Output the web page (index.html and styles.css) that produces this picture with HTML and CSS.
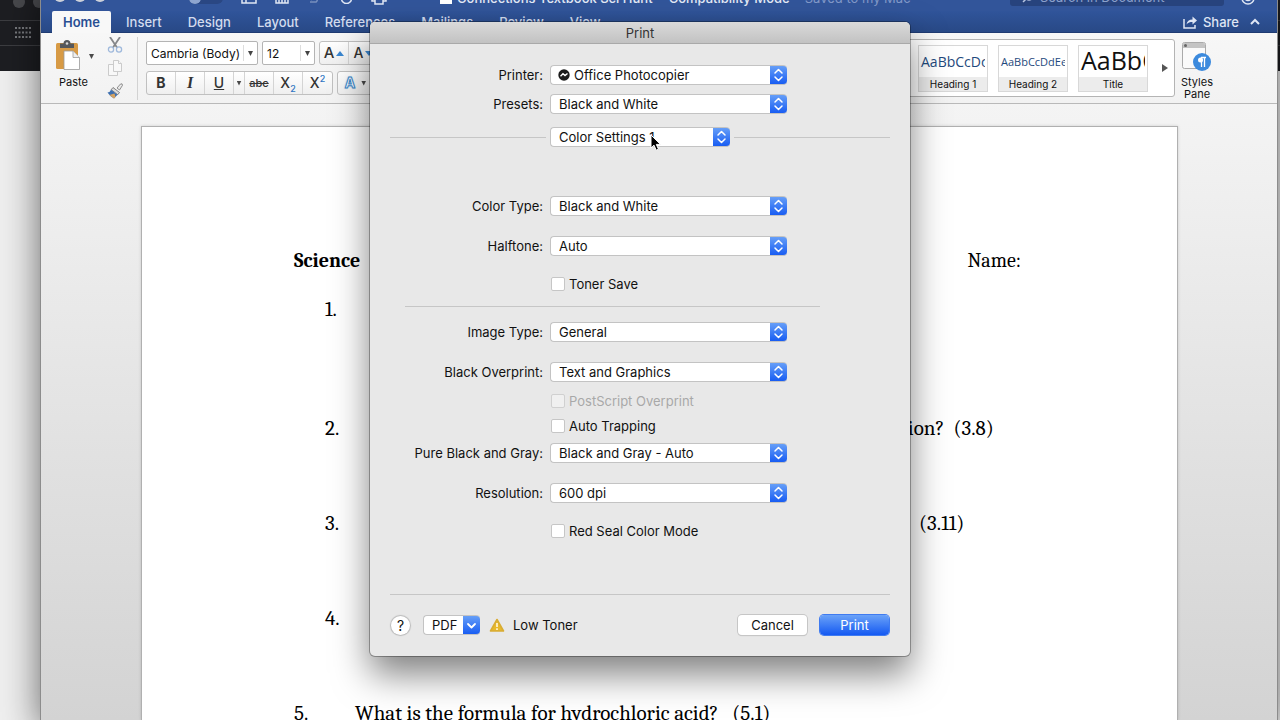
FILE: index.html
```html
<!DOCTYPE html>
<html lang="en">
<head>
    <meta charset="UTF-8">
    <meta name="viewport" content="width=device-width, initial-scale=1.0">
    <title>Print</title>
    <link rel="stylesheet" href="styles.css">
</head>
<body>
    <!-- Dark app behind the document window -->
    <div class="back-app">
        <div class="back-row back-lights"><span></span><span></span></div>
        <div class="back-row back-tools">
            <svg width="16" height="12" viewBox="0 0 16 12" fill="#77797d">
                <path d="M0 0h2v2H0zM3.500 0h2v2h-2zM7 0h2v2H7zM10.500 0h2v2h-2zM14 0h2v2h-2zM0 4.500h2v2H0zM3.500 4.500h2v2h-2zM7 4.500h2v2H7zM10.500 4.500h2v2h-2zM14 4.500h2v2h-2zM0 9h2v2H0zM3.500 9h2v2h-2zM7 9h2v2H7zM10.500 9h2v2h-2zM14 9h2v2h-2z"/>
            </svg>
        </div>
    </div>

    <!-- Document window -->
    <div class="word">
        <header class="titlebar">
            <div class="lights"><span></span><span></span><span></span></div>
            <span class="autosave"><i></i></span>
            <div class="quick">
                <svg width="16" height="12" viewBox="0 0 16 12" fill="none" stroke="#dfe6f4" stroke-width="1.500"><path d="M1 1h14v10H1zM5 1v10M7 7h5"/></svg>
                <svg width="14" height="12" viewBox="0 0 14 12" fill="none" stroke="#dfe6f4" stroke-width="1.500"><path d="M1 1h12v10H1zM4 11V7h6v4M7 7v4"/></svg>
                <svg class="dim" width="14" height="12" viewBox="0 0 14 12" fill="none" stroke="#dfe6f4" stroke-width="1.500"><path d="M2 5h7a3 3 0 0 1 0 5H3M5 2L2 5l3 3"/></svg>
                <svg width="14" height="12" viewBox="0 0 14 12" fill="none" stroke="#dfe6f4" stroke-width="1.500"><path d="M11 3a5 5 0 1 1-7 0M11 0v4H7"/></svg>
                <svg width="16" height="14" viewBox="0 0 16 14" fill="none" stroke="#dfe6f4" stroke-width="1.500"><path d="M4 4V1h8v3M4 10H1V4h14v6h-3M4 8h8v5H4z"/></svg>
            </div>
            <div class="doc-title">
                <svg width="12" height="12" viewBox="0 0 12 12"><path d="M0 0h12v12H0z" fill="#fff"/><path d="M2 3h8M2 6h8" stroke="#2b4f90"/></svg>
                <span>Connections Textbook Sci Hunt</span>
                <span>-</span>
                <span>Compatibility Mode</span>
                <span class="saved">Saved to my Mac</span>
            </div>
            <div class="search">
                <svg width="12" height="12" viewBox="0 0 12 12" fill="none" stroke="#b6c4e0" stroke-width="1.500"><circle cx="7" cy="5" r="4"/><path d="M4 8l-3 3"/></svg>
                <input type="text" placeholder="Search in Document" aria-label="Search in Document">
            </div>
            <svg class="smile" width="14" height="14" viewBox="0 0 14 14" fill="none" stroke="#dfe6f4" stroke-width="1.500"><circle cx="7" cy="7" r="6"/><path d="M4 8q3 3 6 0"/></svg>
        </header>

        <nav class="tabs">
            <a href="#" class="tab active">Home</a>
            <a href="#" class="tab">Insert</a>
            <a href="#" class="tab">Design</a>
            <a href="#" class="tab">Layout</a>
            <a href="#" class="tab">References</a>
            <a href="#" class="tab">Mailings</a>
            <a href="#" class="tab">Review</a>
            <a href="#" class="tab">View</a>
            <a href="#" class="share">
                <svg width="15" height="14" viewBox="0 0 15 14" fill="none" stroke="#dfe6f4" stroke-width="1.500">
                    <path d="M1 4v9h11v-3"/><path d="M3.500 9.500C4 6 6 4.500 9.500 4.500V1.500L14 5.500 9.500 9.500V7C7 7 5 7.500 3.500 9.500z" fill="#dfe6f4" stroke="none"/>
                </svg>
                Share
            </a>
            <button class="collapse" type="button" aria-label="Collapse ribbon">
                <svg width="10" height="7" viewBox="0 0 10 7" fill="none" stroke="#dfe6f4" stroke-width="2"><path d="M1 6l4-4 4 4"/></svg>
            </button>
        </nav>

        <div class="ribbon">
            <button class="paste" type="button">
                <svg width="24" height="30" viewBox="0 0 24 30">
                    <rect x="0" y="3" width="22" height="26" rx="1.500" fill="#d79a45"/>
                    <path d="M4 3.500h3.500a3.500 3.500 0 0 1 7 0H18V8H4z" fill="#55585c"/>
                    <circle cx="11" cy="3.500" r="1.300" fill="#d8d8d8"/>
                    <path d="M8 11h9l6.500 6.500V29.500H8z" fill="#fff" stroke="#999" stroke-width=".8"/>
                    <path d="M17 11v6.500h6.500" fill="#eee" stroke="#999" stroke-width=".8"/>
                </svg>
                <span>Paste</span>
            </button>
            <span class="caret paste-caret"></span>
            <div class="clip-tools">
                <button type="button" aria-label="Cut">
                    <svg width="16" height="16" viewBox="0 0 16 16" fill="none">
                        <path d="M3 0l7 10.500M13 0L6 10.500" stroke="#85878a" stroke-width="1.800"/>
                        <circle cx="4" cy="12.500" r="2.600" stroke="#9fb9dc" stroke-width="1.300"/>
                        <circle cx="12" cy="12.500" r="2.600" stroke="#9fb9dc" stroke-width="1.300"/>
                    </svg>
                </button>
                <button type="button" aria-label="Copy">
                    <svg width="16" height="16" viewBox="0 0 16 16" fill="#f8f8f8" stroke="#cbcbcb">
                        <path d="M1.500 4.500h6l3 3v8h-9z"/><path d="M6.500.5h5l3 3v8h-8z"/><path d="M11.500.5v3h3"/>
                    </svg>
                </button>
                <button type="button" aria-label="Format Painter">
                    <svg width="16" height="16" viewBox="0 0 16 16">
                        <path d="M10 5l3.500-4q2-1 2 1.300L12.500 7z" fill="#e9e9e9" stroke="#777" stroke-width=".8"/>
                        <path d="M6 4.500l6.500 5-1.800 2.200-6.500-5z" fill="#ddd" stroke="#666" stroke-width=".8"/>
                        <path d="M4 6.800l6.500 5L7 15.500Q3 13.500.5 9.500q2.500 0 3.500-2.700z" fill="#3d6fb0"/>
                        <path d="M2.500 12l5-1.500 1 3.500-1.500 1.500z" fill="#d5a260"/>
                    </svg>
                </button>
            </div>
            <div class="font-tools">
                <div class="tool-row">
                    <select class="box font-name" aria-label="Font"><option>Cambria (Body)</option></select>
                    <select class="box font-size" aria-label="Font size"><option>12</option></select>
                    <div class="btn-group">
                        <button type="button" class="grow">A<svg width="8" height="5" viewBox="0 0 8 5" fill="#3a86d0"><path d="M0 5l4-5 4 5z"/></svg></button>
                        <button type="button" class="shrink">A<svg width="8" height="5" viewBox="0 0 8 5" fill="#3a86d0"><path d="M0 0h8L4 5z"/></svg></button>
                    </div>
                </div>
                <div class="tool-row">
                    <div class="btn-group">
                        <button type="button"><b>B</b></button>
                        <button type="button"><i class="italic">I</i></button>
                        <button type="button"><u>U</u></button>
                        <button type="button" class="narrow" aria-label="Underline styles"><span class="caret"></span></button>
                        <button type="button"><s>abc</s></button>
                        <button type="button"><span>X<sub>2</sub></span></button>
                        <button type="button"><span>X<sup>2</sup></span></button>
                    </div>
                    <div class="btn-group">
                        <button type="button" class="effects"><span class="glow">A</span><span class="caret"></span></button>
                        <button type="button" aria-label="Highlight"></button>
                    </div>
                </div>
            </div>
            <div class="gallery">
                <button type="button" class="style-card"><span class="sample h1">AaBbCcDc</span><span class="name">Heading 1</span></button>
                <button type="button" class="style-card"><span class="sample h2">AaBbCcDdEe</span><span class="name">Heading 2</span></button>
                <button type="button" class="style-card"><span class="sample title">AaBbC</span><span class="name">Title</span></button>
                <svg class="more" width="6" height="8" viewBox="0 0 6 8" fill="#555"><path d="M0 0l6 4-6 4z"/></svg>
            </div>
            <button type="button" class="styles-pane">
                <svg width="30" height="30" viewBox="0 0 30 30">
                    <rect x=".5" y=".5" width="23" height="26" rx="2" fill="#fafafa" stroke="#aaa"/>
                    <path d="M1 6V2.500Q1 1 2.500 1h19Q23 1 23 2.500V6z" fill="#c4c4c4"/>
                    <circle cx="3.500" cy="3.500" r="1.500" fill="#666"/>
                    <circle cx="20" cy="20" r="9" fill="#3c8add"/>
                    <path d="M19.500 25V15.500M22.500 25V15.500M24 15.500h-5" stroke="#fff" stroke-width="1.300" fill="none"/>
                    <circle cx="18.500" cy="18" r="2.500" fill="#fff"/>
                </svg>
                <span>Styles<br>Pane</span>
            </button>
        </div>

        <main class="canvas">
            <article class="page">
                <div class="line heading"><strong>Science</strong><span class="student">Name:</span></div>
                <div class="line question q1"><span class="num">1.</span></div>
                <div class="line question q2"><span class="num">2.</span><span class="tail">tion?&nbsp; (3.8)</span></div>
                <div class="line question q3"><span class="num">3.</span><span class="tail">?&nbsp; (3.11)</span></div>
                <div class="line question q4"><span class="num">4.</span></div>
                <div class="line q5"><span class="num wide">5.</span><span>What is the formula for hydrochloric acid?&nbsp;&nbsp; (5.1)</span></div>
            </article>
        </main>
    </div>

    <!-- Print dialog -->
    <form class="dialog">
        <h1 class="dialog-title">Print</h1>
        <div class="dialog-body">
            <div class="row first">
                <label for="printer">Printer:</label>
                <div class="with-icon">
                    <select id="printer"><option>Office Photocopier</option></select>
                    <svg width="12" height="12" viewBox="0 0 12 12"><circle cx="6" cy="6" r="5.700" fill="#1b1b1b"/><path d="M2.500 7.300L5 4.800l2 1.700 2.500-2" fill="none" stroke="#fff" stroke-width="1.400"/></svg>
                </div>
            </div>
            <div class="row near">
                <label for="presets">Presets:</label>
                <select id="presets"><option>Black and White</option></select>
            </div>
            <div class="section-row">
                <hr>
                <select aria-label="Settings section"><option>Color Settings 1</option></select>
                <hr>
            </div>
            <div class="row section-start">
                <label for="colorType">Color Type:</label>
                <select id="colorType"><option>Black and White</option></select>
            </div>
            <div class="row">
                <label for="halftone">Halftone:</label>
                <select id="halftone"><option>Auto</option></select>
            </div>
            <div class="check">
                <input type="checkbox" id="tonerSave"><label for="tonerSave">Toner Save</label>
            </div>
            <hr class="divider">
            <div class="row after-divider">
                <label for="imageType">Image Type:</label>
                <select id="imageType"><option>General</option></select>
            </div>
            <div class="row">
                <label for="overprint">Black Overprint:</label>
                <select id="overprint"><option>Text and Graphics</option></select>
            </div>
            <div class="check near">
                <input type="checkbox" id="psOverprint" disabled><label for="psOverprint">PostScript Overprint</label>
            </div>
            <div class="check tight">
                <input type="checkbox" id="trapping"><label for="trapping">Auto Trapping</label>
            </div>
            <div class="row after-checks">
                <label for="pureBlack">Pure Black and Gray:</label>
                <select id="pureBlack"><option>Black and Gray - Auto</option></select>
            </div>
            <div class="row">
                <label for="resolution">Resolution:</label>
                <select id="resolution"><option>600 dpi</option></select>
            </div>
            <div class="check">
                <input type="checkbox" id="redSeal"><label for="redSeal">Red Seal Color Mode</label>
            </div>
        </div>
        <footer class="dialog-footer">
            <button type="button" class="help" aria-label="Help">?</button>
            <select class="pdf" aria-label="PDF"><option>PDF</option></select>
            <div class="status">
                <svg width="16" height="15" viewBox="0 0 16 15">
                    <path d="M8 1.500L14.500 13h-13z" fill="#e8b92c" stroke="#d8ac34" stroke-width="1.600" stroke-linejoin="round"/>
                    <path d="M8 5v4M8 10.300v1.700" stroke="#fff8e0" stroke-width="1.600"/>
                </svg>
                <span>Low Toner</span>
            </div>
            <button type="button" class="btn">Cancel</button>
            <button type="submit" class="btn primary">Print</button>
        </footer>
        <svg class="pointer" width="12" height="18" viewBox="0 0 12 18"><path d="M1 1v13l3-2.800 2.200 5 2.300-1-2.200-4.800h4.200z" fill="#000" stroke="#fff"/></svg>
    </form>
</body>
</html>
```
FILE: styles.css
```css
* {
    margin: 0;
    padding: 0;
    box-sizing: border-box;
}

body {
    position: relative;
    height: 100vh;
    overflow: hidden;
    background: #efefef;
    font-family: Inter, "Liberation Sans", sans-serif;
    font-size: 13px;
    color: #111;
}

button,
select,
input {
    font: inherit;
    color: inherit;
}

button {
    border: 0;
    background: none;
}

a {
    text-decoration: none;
}

svg {
    display: block;
    flex: none;
}

hr {
    border: 0;
    border-top: 1px solid #c6c6c6;
}

/* App behind */
.back-app {
    position: absolute;
    top: 0;
    left: 0;
    right: 0;
    height: 71px;
    background: #1d1e22;
}

.back-row {
    display: flex;
    align-items: center;
    border-bottom: 1px solid #3c3d41;
    padding-left: 13px;
}

.back-lights {
    height: 21px;
    gap: 8px;
    align-items: flex-start;
}

.back-lights span {
    width: 12px;
    height: 12px;
    margin-top: -4px;
    border-radius: 50%;
    background: #48494d;
}

.back-tools {
    height: 25px;
    padding-left: 15px;
}

/* Document window */
.word {
    position: absolute;
    top: -15px;
    left: 41px;
    right: 3px;
    bottom: 0;
    display: flex;
    flex-direction: column;
    background: #f4f4f4;
    box-shadow: 0 0 0 1px #8c8c8c, 0 10px 36px rgba(0, 0, 0, 0.6);
}

.titlebar {
    display: flex;
    align-items: center;
    height: 26px;
    padding-left: 13px;
    background: #32559a;
    color: #e3e9f5;
    font-weight: 500;
}

.lights {
    display: flex;
    gap: 8px;
    margin-bottom: 5px;
}

.lights span {
    width: 12px;
    height: 12px;
    border-radius: 50%;
    background: #cdd1da;
}

.autosave {
    width: 34px;
    height: 12px;
    margin-left: 83px;
    border-radius: 6px;
    background: #2a4783;
}

.autosave i {
    display: block;
    width: 12px;
    height: 12px;
    border-radius: 50%;
    background: #8ea5cf;
}

.quick {
    display: flex;
    align-items: center;
    gap: 18px;
    margin-left: 18px;
    width: 199px;
}

.dim {
    opacity: 0.4;
}

.doc-title {
    display: flex;
    align-items: center;
    gap: 5px;
    white-space: nowrap;
}

.saved {
    margin-left: 10px;
    font-weight: 400;
    color: #8299c8;
}

.search {
    display: flex;
    align-items: center;
    gap: 6px;
    width: 214px;
    height: 18px;
    margin: -3px 17px 0 auto;
    padding-left: 12px;
    border-radius: 3px;
    background: #27437d;
}

.search input {
    flex: 1;
    min-width: 0;
    border: 0;
    background: none;
    font-weight: 400;
}

.search input::placeholder {
    color: #8ba0cb;
}

.smile {
    margin-right: 22px;
}

/* Tabs */
.tabs {
    display: flex;
    align-items: center;
    height: 22px;
    padding-left: 11px;
    background: linear-gradient(#30549a, #284986);
    border-bottom: 1px solid #1f3b72;
    font-weight: 500;
}

.tab {
    padding: 0 13px;
    line-height: 20px;
    color: #d3dcee;
}

.tab.active {
    padding: 0 11px;
    margin-right: 2px;
    line-height: 22px;
    background: #f8f8f8;
    border-radius: 2px 2px 0 0;
    color: #284f93;
    font-weight: 600;
}

.share {
    display: flex;
    align-items: center;
    gap: 5px;
    margin-left: auto;
    color: #dfe6f4;
}

.collapse {
    margin: 0 17px 0 11px;
}

/* Ribbon */
.ribbon {
    display: flex;
    height: 71px;
    padding: 4px 0 3px 15px;
    background: linear-gradient(#f7f7f7, #f2f2f2);
    border-bottom: 1px solid #b9b9b9;
    font-size: 11px;
}

.paste {
    display: flex;
    flex-direction: column;
    gap: 5px;
    padding-top: 3px;
    width: 33px;
}

.paste span {
    margin-left: 2px;
    line-height: 14px;
}

.caret {
    width: 5px;
    height: 5px;
    background: #4a4a4a;
    clip-path: polygon(0 0, 100% 0, 50% 100%);
}

.paste-caret {
    margin-top: 17px;
}

.clip-tools {
    display: flex;
    flex-direction: column;
    gap: 7px;
    width: 44px;
    padding: 0 0 0 13px;
    border-right: 1px solid #d2d2d2;
}

.font-tools {
    display: flex;
    flex-direction: column;
    gap: 6px;
    padding: 4px 0 0 8px;
    color: #333;
}

.tool-row {
    display: flex;
    gap: 4px;
}

.box {
    appearance: none;
    height: 24px;
    padding-left: 4px;
    border: 1px solid #b4b4b4;
    border-radius: 2px;
    background: url('data:image/svg+xml,<svg xmlns="http://www.w3.org/2000/svg" width="14" height="22"><path d="M.5 3v16" stroke="%23ddd"/><path d="M5 9h5l-2.500 5z" fill="%23444"/></svg>') right center no-repeat #fff;
    font-size: 12px;
    color: #111;
}

.font-name {
    width: 112px;
}

.font-size {
    width: 53px;
}

.btn-group {
    display: flex;
    height: 24px;
    border: 1px solid #c0c0c0;
    border-radius: 3px;
    background: linear-gradient(#fff, #efefef);
}

.btn-group button {
    display: flex;
    align-items: center;
    justify-content: center;
    gap: 2px;
    width: 29px;
    border-right: 1px solid #d4d4d4;
    font-size: 14px;
    font-weight: 500;
    line-height: 20px;
}

.btn-group button:last-child {
    border-right: 0;
}

.btn-group .narrow {
    width: 11px;
}

.btn-group .grow {
    font-size: 15px;
}

.italic {
    font-family: "Liberation Serif", serif;
    font-size: 16px;
    font-weight: 700;
}

.btn-group s {
    font-size: 11px;
}

.btn-group sub,
.btn-group sup {
    font-size: 9px;
    line-height: 0;
    color: #2f75c2;
}

.glow {
    color: #fff;
    font-weight: 700;
    -webkit-text-stroke: 1px #3a86c8;
    text-shadow: 0 0 2px #78b6ea;
}

.btn-group .effects {
    width: 36px;
    gap: 6px;
}

.gallery {
    display: flex;
    align-items: center;
    justify-content: flex-end;
    gap: 10px;
    width: 310px;
    height: 58px;
    margin: 2px 0 0 auto;
    padding-right: 6px;
    border: 1px solid #b4b4b4;
    border-radius: 3px;
    background: #fff;
}

.style-card {
    display: flex;
    flex-direction: column;
    width: 70px;
    height: 47px;
    border: 1px solid #d8d8d8;
    overflow: hidden;
}

.sample {
    width: 66px;
    height: 31px;
    padding-left: 2px;
    overflow: hidden;
    white-space: nowrap;
    font-family: "Open Sans", sans-serif;
    line-height: 31px;
    text-align: left;
    color: #1f4a7d;
}

.h1 {
    font-size: 14px;
}

.h2 {
    font-size: 11px;
}

.title {
    font-size: 25px;
    line-height: 29px;
    color: #111;
}

.name {
    width: 100%;
    background: #ececec;
    font-size: 10px;
    line-height: 14px;
}

.more {
    margin: 0 0 0 4px;
}

.styles-pane {
    display: flex;
    flex-direction: column;
    align-items: center;
    width: 44px;
    margin-right: 58px;
    padding-top: 5px;
    line-height: 12px;
    gap: 4px;
}

/* Document page */
.canvas {
    flex: 1;
    display: flex;
    min-height: 0;
    padding: 22px 99px 0 100px;
    background: linear-gradient(#f4f4f4, #e0e0e0 60%, #d3d3d3);
}

.page {
    flex: 1;
    padding: 122px 0 0 152px;
    overflow: hidden;
    border: 1px solid #b0b0b0;
    border-bottom: 0;
    background: #fff;
    box-shadow: 0 0 3px rgba(0, 0, 0, 0.15);
    font-family: Cambria, "Noto Serif", "Liberation Serif", serif;
    font-size: 21px;
    line-height: 24px;
    white-space: nowrap;
    color: #000;
}

.heading {
    font-size: 20px;
}

.line {
    display: flex;
}

.student {
    margin-left: auto;
    margin-right: 156px;
}

.question {
    padding-left: 31px;
}

.num {
    width: 30px;
}

.num.wide {
    width: 61px;
}

.tail {
    margin-left: 546px;
}

.q1 {
    margin-top: 24px;
}

.q2 {
    margin-top: 95px;
}

.q3,
.q4,
.q5 {
    margin-top: 71px;
}

/* Print dialog */
.dialog {
    position: absolute;
    top: 22px;
    left: 50%;
    width: 540px;
    margin-left: -270px;
    border-radius: 5px;
    background: #e8e8e8;
    box-shadow: 0 0 0 1px rgba(0, 0, 0, 0.3), 0 18px 36px rgba(0, 0, 0, 0.5);
}

.dialog-title {
    height: 22px;
    border-bottom: 1px solid #a9a9a9;
    border-radius: 5px 5px 0 0;
    background: linear-gradient(#dadada, #c2c2c2);
    font-size: 13px;
    font-weight: 400;
    line-height: 22px;
    text-align: center;
    color: #333;
}

.dialog-body {
    padding: 0 20px;
}

.row {
    display: grid;
    grid-template-columns: 153px 237px;
    column-gap: 7px;
    align-items: center;
    height: 20px;
    margin-top: 20px;
}

.row label {
    text-align: right;
    white-space: nowrap;
}

.dialog select {
    appearance: none;
    display: block;
    width: 100%;
    height: 20px;
    padding-left: 8px;
    border: 1px solid #c3c3c3;
    border-right: 0;
    border-radius: 4px;
    background:
        url('data:image/svg+xml,<svg xmlns="http://www.w3.org/2000/svg" width="17" height="20" fill="none" stroke="%23fff" stroke-width="1.500" stroke-linecap="round" stroke-linejoin="round"><path d="M5 8l3.500-3.500L12 8M5 12l3.500 3.500L12 12"/></svg>') right center / 17px 20px no-repeat border-box,
        linear-gradient(#6aa2f8, #1459f2) right / 17px 100% no-repeat border-box,
        #fff;
    line-height: 18px;
    color: #111;
}

.with-icon {
    position: relative;
}

.dialog .with-icon select {
    padding-left: 23px;
}

.with-icon svg {
    position: absolute;
    top: 4px;
    left: 8px;
}

.section-row {
    display: grid;
    grid-template-columns: 156px 180px 1fr;
    column-gap: 4px;
    align-items: center;
    margin-top: 13px;
}

.check {
    display: flex;
    align-items: center;
    gap: 4px;
    height: 20px;
    margin-top: 18px;
    padding-left: 161px;
}

.check input {
    appearance: none;
    width: 14px;
    height: 14px;
    border: 1px solid #c6c6c6;
    border-radius: 2px;
    background: #fff;
}

.check input:disabled {
    border-color: #d0d0d0;
    background: #f0f0f0;
}

.check input:disabled + label {
    color: #a8a8a8;
}

.divider {
    margin: 12px 70px 0 15px;
}

.row.first {
    margin-top: 21px;
}

.near {
    margin-top: 9px;
}

.tight {
    margin-top: 5px;
}

.after-checks {
    margin-top: 7px;
}

.section-start {
    margin-top: 49px;
}

.after-divider {
    margin-top: 15px;
}

.dialog-footer {
    display: flex;
    align-items: center;
    margin: 53px 20px 0;
    padding: 20px 1px 21px;
    border-top: 1px solid #c6c6c6;
}

.help {
    width: 19px;
    height: 19px;
    border-radius: 50%;
    background: #fff;
    box-shadow: 0 0 1px 1px rgba(0, 0, 0, 0.2);
    font-size: 14px;
    line-height: 19px;
}

.dialog .pdf {
    width: 57px;
    margin-left: 13px;
    background:
        url('data:image/svg+xml,<svg xmlns="http://www.w3.org/2000/svg" width="17" height="20" fill="none" stroke="%23fff" stroke-width="1.800" stroke-linecap="round" stroke-linejoin="round"><path d="M5 9l3.500 3.500L12 9"/></svg>') right center / 17px 20px no-repeat border-box,
        linear-gradient(#6aa2f8, #1459f2) right / 17px 100% no-repeat border-box,
        #fff;
}

.status {
    display: flex;
    align-items: center;
    gap: 8px;
    margin: 0 auto 0 9px;
}

.btn {
    width: 69px;
    height: 20px;
    margin-left: 13px;
    border-radius: 4px;
    background: #fff;
    box-shadow: 0 0 0 1px #c6c6c6, 0 1px 1px rgba(0, 0, 0, 0.2);
    line-height: 20px;
}

.btn.primary {
    background: linear-gradient(#6aa2f8, #1459f2);
    box-shadow: 0 0 0 1px #3f7bf0;
    color: #fff;
}

.pointer {
    position: absolute;
    top: 112px;
    left: 280px;
}
```
